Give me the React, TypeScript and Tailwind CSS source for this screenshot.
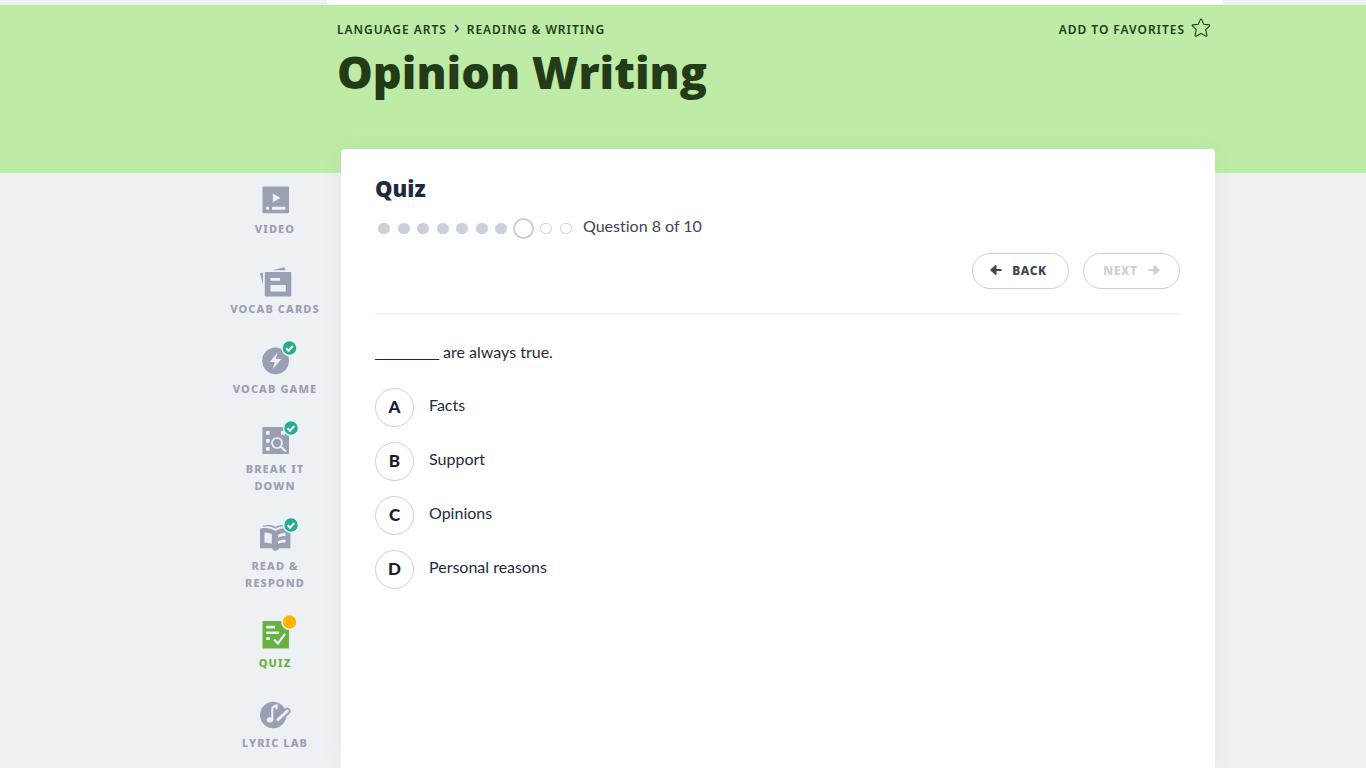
import type { ReactNode } from "react";

type Badge = "done" | "pending";

interface Activity {
  label: string;
  icon: ReactNode;
  badge?: Badge;
  badgeX?: number;
  active?: boolean;
}

const cut = "fill-[#edf1f4]";

const activities: Activity[] = [
  {
    label: "Video",
    icon: (
      <>
        <rect x="3.5" y="2.5" width="26.5" height="26.8" rx="1" />
        <path className={cut} d="M13.8 9.6v8.6l7.6-4.3z" />
        <rect className={cut} x="7.2" y="22.8" width="3" height="3" rx=".8" />
        <rect className={cut} x="13" y="22.8" width="13.4" height="3" rx=".4" />
      </>
    ),
  },
  {
    label: "Vocab Cards",
    icon: (
      <>
        <path d="M13.5 6.3 25.4 3.2l1.2 3.1zM1 9.6l3-1v12.2z" />
        <rect x="5.8" y="8" width="26.5" height="24.4" rx="1" />
        <rect className={cut} x="11.4" y="14" width="9.6" height="2.8" />
        <rect className={cut} x="11.4" y="21" width="15.4" height="6.6" />
      </>
    ),
  },
  {
    label: "Vocab Game",
    badge: "done",
    badgeX: 30.5,
    icon: (
      <>
        <circle cx="16.6" cy="16.8" r="13.4" />
        <path className={cut} d="m18.6 8.6-8 9.4h5.2l-1.9 7.1 8.5-10h-5.5z" />
      </>
    ),
  },
  {
    label: "Break It Down",
    badge: "done",
    badgeX: 32,
    icon: (
      <>
        <rect x="3.4" y="3" width="26.6" height="27" rx="1" />
        <g className={cut}>
          <rect x="7" y="7" width="3.7" height="3.7" rx=".4" />
          <rect x="7" y="15" width="3.7" height="3.7" rx=".4" />
          <rect x="7" y="23" width="3.7" height="3.7" rx=".4" />
          <rect x="22" y="7" width="4" height="3.7" />
        </g>
        <circle cx="18" cy="19" r="5" fill="none" stroke="#edf1f4" strokeWidth="1.7" />
        <path d="m21.8 22.8 4.6 4.2" stroke="#edf1f4" strokeWidth="2" strokeLinecap="round" />
      </>
    ),
  },
  {
    label: "Read & Respond",
    badge: "done",
    badgeX: 32,
    icon: (
      <>
        <path d="M4.3 4.5c4.5-1 8.7-.8 12.2 1.4C20 3.7 24 3.5 28.5 4.5v1.4c-4.5-.8-8.5-.5-12 1.8-3.5-2.3-7.7-2.6-12.2-1.8z" />
        <path d="M2 7.2c6-.7 10.5 0 14.5 2.8 4-2.8 8.5-3.5 14-2.8.5 0 .9.4.9.9v18.2c0 .6-.4 1-1 1H20c-.5 1.5-1.7 2.4-3.5 2.4s-3-.9-3.5-2.4H2c-.6 0-1-.4-1-1V8.1c0-.5.4-.9 1-.9z" />
        <path className={cut} d="M5.5 11.7c2.8 0 5 .3 7.3 1.3v9.8c-2.3-.9-4.5-1.1-7.3-1.1zM19 14c2.2-1.3 4.5-1.9 7.5-1.9v2.8c-3 0-5.3.5-7.5 1.7zM19 20.2c2.2-1.2 4.5-1.7 7.5-1.7v2.9c-3 0-5.3.4-7.5 1.5z" />
      </>
    ),
  },
  {
    label: "Quiz",
    badge: "pending",
    badgeX: 30.5,
    active: true,
    icon: (
      <>
        <rect x="3.5" y="3" width="26.5" height="27.5" rx="1" />
        <g className={cut}>
          <rect x="7.2" y="7.8" width="8.8" height="2.6" rx=".5" />
          <rect x="7.2" y="13.4" width="12.8" height="2.7" rx=".5" />
          <rect x="7.2" y="19.2" width="3.8" height="2.7" rx=".5" />
        </g>
        <path d="m15.2 21.6 3.6 4 7.2-9.8" fill="none" stroke="#edf1f4" strokeWidth="2.2" />
      </>
    ),
  },
  {
    label: "Lyric Lab",
    icon: (
      <>
        <circle cx="14.2" cy="17" r="13.2" />
        <g transform="rotate(-43 25 16.5)">
          <rect x="15.5" y="12.8" width="17.5" height="6.8" rx="3.4" />
          <rect className={cut} x="15.5" y="14.7" width="15.8" height="3" rx="1.5" />
        </g>
        <path d="M13.3 21.5V9.6l4.2-2.4v4" fill="none" stroke="#edf1f4" strokeWidth="2" />
        <ellipse className={cut} cx="11" cy="21.8" rx="3.2" ry="2.6" />
      </>
    ),
  },
];

function StatusBadge({ kind, x }: { kind: Badge; x: number }) {
  return (
    <g transform={`translate(${x} 4)`}>
      <circle r="7.5" fill={kind === "done" ? "#24ae91" : "#ffb400"} stroke="#edf1f4" strokeWidth="1.5" />
      {kind === "done" && (
        <path d="m-3.4.3 2.4 2.4 4.3-4.7" fill="none" stroke="#fff" strokeWidth="2" />
      )}
    </g>
  );
}

function ActivityLink({ item }: { item: Activity }) {
  const color = item.active ? "text-[#65b243]" : "text-[#9aa0b4]";
  return (
    <a href="#" className={`flex flex-col items-center gap-1 ${color}`}>
      <svg viewBox="0 0 32 32" className="size-8 overflow-visible" fill="currentColor" aria-hidden="true">
        {item.icon}
        {item.badge && <StatusBadge kind={item.badge} x={item.badgeX ?? 30} />}
      </svg>
      <span className="text-center font-['Noto_Sans',sans-serif] text-[11px] leading-[17px] font-extrabold tracking-widest uppercase">
        {item.label}
      </span>
    </a>
  );
}

function Arrow({ flip = false }: { flip?: boolean }) {
  return (
    <svg viewBox="0 0 12 12" className={flip ? "mb-0.5 size-3 rotate-180" : "mb-0.5 size-3"} fill="currentColor" aria-hidden="true">
      <path d="M5.2 1.2c.6-.5 1.3-.2 1.3.6v3.1h4.3a1.1 1.1 0 0 1 0 2.2H6.5v3.1c0 .8-.7 1.1-1.3.6L.7 6.7a.9.9 0 0 1 0-1.4z" />
    </svg>
  );
}

function Progress({ current, total }: { current: number; total: number }) {
  const done = Array.from({ length: current - 1 }, (_, i) => i);
  const left = Array.from({ length: total - current }, (_, i) => i);
  return (
    <div className="flex items-center pl-[3px]">
      <div className="flex w-[129px] justify-between">
        {done.map((i) => (
          <span key={i} className="h-[11px] w-3 rounded-full bg-[#cbcfda]" />
        ))}
      </div>
      <span className="mx-1.5 size-[21px] rounded-full border-2 border-[#cbcfda]" />
      <div className="flex gap-2">
        {left.map((i) => (
          <span key={i} className="h-[11px] w-3 rounded-full border border-[#cbcfda]" />
        ))}
      </div>
      <p className="ml-[11px] pb-1 text-base text-[#414654]">
        Question {current} of {total}
      </p>
    </div>
  );
}

const answers = ["Facts", "Support", "Opinions", "Personal reasons"];

export default function App() {
  return (
    <div className="flex h-screen flex-col overflow-hidden bg-[#edf1f4] font-[Lato,sans-serif] text-[#1f2b3d] [font-variant-ligatures:none]">
      <div className="mx-auto h-[5px] w-full max-w-[1080px] shrink-0 pl-[184px]">
        <div className="h-full bg-white" />
      </div>

      <header className="h-[168px] shrink-0 bg-[#beeca6] text-[#233b17]">
        <div className="mx-auto max-w-[1080px] pt-3.5 pr-3 pl-[194px]">
          <div className="flex items-center justify-between font-['Noto_Sans',sans-serif] text-xs leading-[22px] font-semibold tracking-[0.08em]">
            <nav className="flex items-center gap-[7px]" aria-label="Breadcrumb">
              <a href="#">LANGUAGE ARTS</a>
              <svg viewBox="0 0 6 10" className="mb-0.5 h-2.5 w-1.5" fill="none" stroke="#25306b" strokeWidth="1.5" aria-hidden="true">
                <path d="m1.2 1 3 3.5-3 3.5" />
              </svg>
              <a href="#">READING &amp; WRITING</a>
            </nav>
            <button type="button" className="flex items-center gap-1.5">
              ADD TO FAVORITES
              <svg viewBox="0 0 20 20" className="-mt-1 size-5" fill="none" stroke="currentColor" strokeWidth="1.1" strokeLinejoin="round" aria-hidden="true">
                <path d="M9.3 1.6Q10 .5 10.7 1.6L12.8 6.3 18 6.9Q19.3 7.2 18.4 8.2L14.7 11.7 15.9 17.2Q15.9 18.7 14.6 18.1L10 15.5 5.4 18.1Q4.1 18.7 4.1 17.2L5.3 11.7 1.6 8.2Q.7 7.2 2 6.9L7.2 6.3Z" />
              </svg>
            </button>
          </div>
          <h1 className="font-['Open_Sans',sans-serif] text-[45px] leading-[62px] font-extrabold">Opinion Writing</h1>
        </div>
      </header>

      <main className="mx-auto -mt-6 flex w-full max-w-[1080px] grow pr-2 pl-20">
        <nav className="flex w-[104px] shrink-0 flex-col gap-[27px] px-1 pt-[35px]" aria-label="Activities">
          {activities.map((item) => (
            <ActivityLink key={item.label} item={item} />
          ))}
        </nav>

        <section className="ml-3.5 grow rounded-t-sm bg-white px-[34px] pt-[25px] shadow-[0_0_24px_rgba(40,70,90,0.05)]">
          <h2 className="font-['Open_Sans',sans-serif] text-[22px] leading-7 font-extrabold">Quiz</h2>
          <div className="mt-3">
            <Progress current={8} total={10} />
          </div>

          <div className="mt-[11px] flex justify-end gap-3.5 border-b-2 border-[#f3f4f6] pr-px pb-6 font-['Noto_Sans',sans-serif] text-xs font-extrabold tracking-wider">
            <button type="button" className="flex h-9 w-[97px] items-center justify-center gap-2.5 rounded-full border border-[#cbcfda] pr-1 text-[#414654]">
              <Arrow />
              BACK
            </button>
            <button type="button" disabled className="flex h-9 w-[97px] items-center justify-center gap-2.5 rounded-full border border-[#cbcfda] text-[#cbcfda]">
              NEXT
              <Arrow flip />
            </button>
          </div>

          <p className="mt-[25px] text-base">
            <span className="font-['Liberation_Serif',serif]">________</span> are always true.
          </p>

          <ul className="mt-[23px] flex flex-col gap-[15px]">
            {answers.map((answer, i) => (
              <li key={answer}>
                <button type="button" className="flex items-center gap-[15px] text-left text-base">
                  <span className="flex size-[39px] items-center justify-center rounded-full border border-[#cbcfda] pb-0.5 text-[17px] font-black text-[#1b1b2f]">
                    {"ABCD"[i]}
                  </span>
                  <span className="pb-1.5">{answer}</span>
                </button>
              </li>
            ))}
          </ul>
        </section>
      </main>
    </div>
  );
}
